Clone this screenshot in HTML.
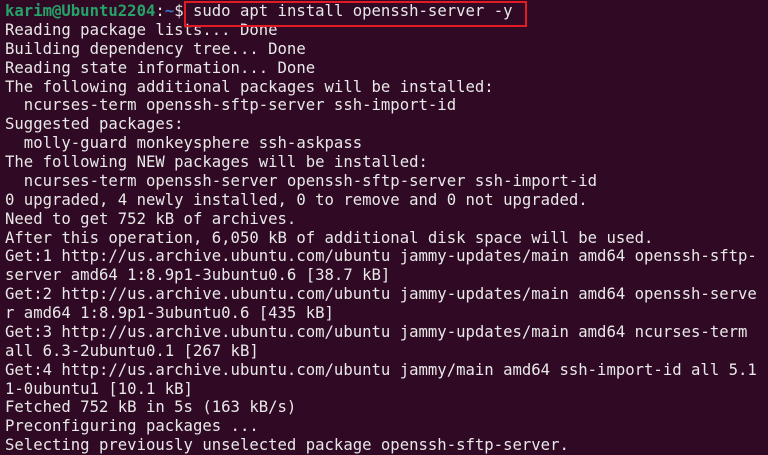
<!DOCTYPE html>
<html><head><style>
html,body{margin:0;padding:0;background:#300a24;width:768px;height:455px;overflow:hidden}
pre{margin:0;position:absolute;left:5px;top:2px;font-family:"DejaVu Sans Mono","Liberation Mono",monospace;font-size:15.62px;line-height:18.87px;color:#e8e8e8;white-space:pre}
.g{color:#26a269;font-weight:bold}.b{color:#3b6fc4;font-weight:bold}
.box{position:absolute;left:184px;top:1px;width:339px;height:22px;border:2px solid #e01b24}
</style></head><body>
<pre><span class="g">karim@Ubuntu2204</span>:<span class="b">~</span>$ sudo apt install openssh-server -y
Reading package lists... Done
Building dependency tree... Done
Reading state information... Done
The following additional packages will be installed:
  ncurses-term openssh-sftp-server ssh-import-id
Suggested packages:
  molly-guard monkeysphere ssh-askpass
The following NEW packages will be installed:
  ncurses-term openssh-server openssh-sftp-server ssh-import-id
0 upgraded, 4 newly installed, 0 to remove and 0 not upgraded.
Need to get 752 kB of archives.
After this operation, 6,050 kB of additional disk space will be used.
Get:1 http://us.archive.ubuntu.com/ubuntu jammy-updates/main amd64 openssh-sftp-
server amd64 1:8.9p1-3ubuntu0.6 [38.7 kB]
Get:2 http://us.archive.ubuntu.com/ubuntu jammy-updates/main amd64 openssh-serve
r amd64 1:8.9p1-3ubuntu0.6 [435 kB]
Get:3 http://us.archive.ubuntu.com/ubuntu jammy-updates/main amd64 ncurses-term
all 6.3-2ubuntu0.1 [267 kB]
Get:4 http://us.archive.ubuntu.com/ubuntu jammy/main amd64 ssh-import-id all 5.1
1-0ubuntu1 [10.1 kB]
Fetched 752 kB in 5s (163 kB/s)
Preconfiguring packages ...
Selecting previously unselected package openssh-sftp-server.</pre>
<div class="box"></div>
</body></html>
